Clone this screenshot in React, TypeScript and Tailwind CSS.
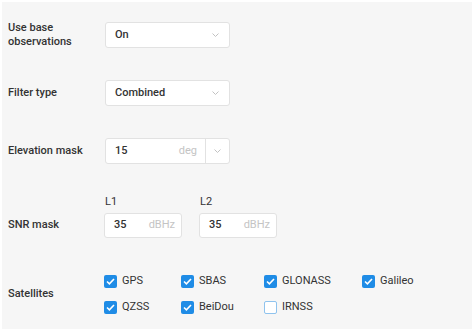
import React from "react";

function Chevron() {
  return (
    <svg width="7" height="4" viewBox="0 0 7 4" fill="none">
      <polyline points="0.5,0.5 3.5,3.5 6.5,0.5" stroke="#c2c2c2" strokeWidth="1" />
    </svg>
  );
}

function Select({ value }: { value: string }) {
  return (
    <div className="flex h-[26px] w-[125px] items-center justify-between rounded-[3px] border border-[#e2e2e2] bg-white pl-[9px] pr-[10px]">
      <span className="text-[11px] font-medium text-[#333]">{value}</span>
      <Chevron />
    </div>
  );
}

function Row({ label, children }: { label: React.ReactNode; children: React.ReactNode }) {
  return (
    <div className="flex items-center">
      <div className="w-[97px] text-[11px] font-medium leading-[14px] text-[#333]">{label}</div>
      {children}
    </div>
  );
}

function SnrBox({ label }: { label: string }) {
  return (
    <div className="flex flex-col">
      <div className="mb-[3px] h-[16px] pl-[1px] text-[11px] leading-[16px] text-[#333]">{label}</div>
      <div className="flex h-[25px] w-[78px] items-center justify-between rounded-[3px] border border-[#e2e2e2] bg-white pl-[9px] pr-[6px]">
        <span className="text-[11px] font-medium text-[#333]">35</span>
        <span className="text-[11px] text-[#c4c4c4]">dBHz</span>
      </div>
    </div>
  );
}

function Check({ label, checked }: { label: string; checked: boolean }) {
  return (
    <div className="flex h-[18px] items-center">
      {checked ? (
        <div className="flex h-[13px] w-[13px] items-center justify-center rounded-[2px] bg-[#1f8ce6]">
          <svg width="9" height="7" viewBox="0 0 9 7" fill="none">
            <polyline points="1,3.5 3.4,5.8 8,1" stroke="white" strokeWidth="1.6" />
          </svg>
        </div>
      ) : (
        <div className="h-[13px] w-[13px] rounded-[2px] border border-[#8fc3ee] bg-white" />
      )}
      <span className="ml-[5px] text-[11px] text-[#333]">{label}</span>
    </div>
  );
}

export default function App() {
  return (
    <div className="h-[331px] w-[474px] bg-white p-[2px]" style={{ fontFamily: "Roboto, 'Liberation Sans', sans-serif" }}>
      <div className="h-full w-full bg-[#f6f6f6] pl-[6px] pt-[19px]">
        <Row label={<>Use base<br />observations</>}>
          <Select value="On" />
        </Row>
        <div className="mt-[31px]">
          <Row label="Filter type">
            <Select value="Combined" />
          </Row>
        </div>
        <div className="mt-[32px]">
          <Row label="Elevation mask">
            <div className="flex h-[26px] w-[125px] items-stretch rounded-[3px] border border-[#e2e2e2] bg-white">
              <div className="flex flex-1 items-center justify-between border-r border-[#e2e2e2] pl-[9px] pr-[8px]">
                <span className="text-[11px] font-medium text-[#333]">15</span>
                <span className="text-[11px] text-[#c4c4c4]">deg</span>
              </div>
              <div className="flex w-[23px] items-center justify-center">
                <Chevron />
              </div>
            </div>
          </Row>
        </div>
        <div className="mt-[30px] flex items-end">
          <div className="flex h-[25px] w-[96px] items-center text-[11px] font-medium text-[#333]">SNR mask</div>
          <div className="flex gap-[17px]">
            <SnrBox label="L1" />
            <SnrBox label="L2" />
          </div>
        </div>
        <div className="mt-[34px] flex items-center">
          <div className="w-[96px] text-[11px] font-medium text-[#333]">Satellites</div>
          <div className="grid grid-cols-[77px_83px_98px_auto] gap-y-[8px]">
            <Check label="GPS" checked />
            <Check label="SBAS" checked />
            <Check label="GLONASS" checked />
            <Check label="Galileo" checked />
            <Check label="QZSS" checked />
            <Check label="BeiDou" checked />
            <Check label="IRNSS" checked={false} />
          </div>
        </div>
      </div>
    </div>
  );
}
